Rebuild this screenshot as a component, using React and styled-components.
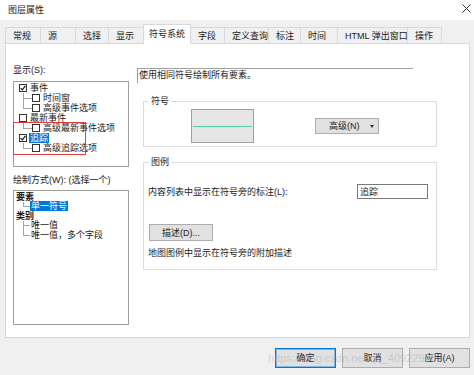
import React from "react";
import styled, { createGlobalStyle } from "styled-components";

const GlobalStyle = createGlobalStyle`
  html, body {
    margin: 0;
    padding: 0;
    background: #f0f0f0;
  }
  body {
    font-family: "Liberation Sans", "Noto Sans CJK SC", sans-serif;
    font-size: 9px;
    color: #1b1b1b;
  }
  * {
    box-sizing: border-box;
  }
`;

const Window = styled.div`
  position: relative;
  width: 474px;
  height: 375px;
  display: flex;
  flex-direction: column;
  background: #f0f0f0;
  overflow: hidden;
`;

const TitleBar = styled.div`
  height: 20px;
  background: #fff;
  display: flex;
  align-items: center;
  justify-content: space-between;
  padding: 0 3px 0 8px;
  line-height: 12px;
`;

const CloseBox = styled.span`
  align-self: flex-start;
  margin-top: 4px;
  width: 9px;
  height: 9px;
  display: flex;
`;

const TabStrip = styled.div`
  position: relative;
  z-index: 1;
  display: flex;
  align-items: flex-end;
  height: 19px;
  margin-top: 4px;
  padding-left: 5px;
`;

const Tab = styled.div`
  width: ${(props) => props.w}px;
  height: ${(props) => (props.active ? "20px" : "16px")};
  margin-bottom: ${(props) => (props.active ? "-1px" : "0")};
  margin-left: ${(props) => (props.first ? "0" : "-1px")};
  position: relative;
  z-index: ${(props) => (props.active ? 2 : 1)};
  display: flex;
  align-items: center;
  padding: ${(props) => (props.active ? "0 0 2px 5px" : "0 0 0 7px")};
  background: ${(props) => (props.active ? "#fff" : "#f0f0f0")};
  border: 1px solid #d9d9d9;
  border-bottom: none;
  line-height: 12px;
  white-space: nowrap;
`;

const Panel = styled.div`
  height: 295px;
  margin: 0 4px 0 5px;
  border: 1px solid #d9d9d9;
  background: #fff;
  display: flex;
  align-items: flex-start;
`;

const LeftCol = styled.div`
  width: 116px;
  margin-left: 7px;
  padding-top: 20px;
  display: flex;
  flex-direction: column;
`;

const FieldLabel = styled.div`
  line-height: 12px;
  height: 12px;
  margin-top: ${(props) => props.top || 0}px;
  margin-bottom: ${(props) => props.bottom || 0}px;
  white-space: nowrap;
`;

const TreeBox = styled.div`
  position: relative;
  height: ${(props) => props.h}px;
  border: 1px solid #9d9d9d;
  background: #fff;
  padding-top: 1px;
`;

const TreeRow = styled.div`
  display: flex;
  align-items: center;
  height: ${(props) => props.h}px;
  padding-left: ${(props) => props.indent}px;
  line-height: 10px;
  white-space: nowrap;
`;

const Connector = styled.span`
  position: relative;
  flex: none;
  align-self: stretch;
  width: ${(props) => props.w}px;

  &::before {
    content: "";
    position: absolute;
    left: 0;
    top: 0;
    width: 1px;
    height: ${(props) => (props.last ? "50%" : "100%")};
    background: #a3a3a3;
  }

  &::after {
    content: "";
    position: absolute;
    left: 0;
    right: 0;
    top: 50%;
    height: 1px;
    background: #a3a3a3;
  }
`;

const CheckBox = styled.span`
  flex: none;
  width: 8px;
  height: 8px;
  border: 1px solid #333;
  background: #fff;
  display: flex;
  align-items: center;
  justify-content: center;
  margin-right: 2px;
`;

const ItemText = styled.span`
  padding: 0 1px;
  font-weight: ${(props) => (props.bold ? 700 : 400)};
  background: ${(props) => (props.selected ? "#0078d7" : "transparent")};
  color: ${(props) => (props.selected ? "#fff" : "inherit")};
`;

const Annotation = styled.svg`
  position: absolute;
  z-index: 5;
  left: -1px;
  top: 40px;
  pointer-events: none;
`;

const RightCol = styled.div`
  width: 300px;
  margin-left: 8px;
  padding-top: 24px;
  display: flex;
  flex-direction: column;
`;

const Desc = styled.div`
  width: 276px;
  height: 15px;
  border-top: 1px solid #a0a0a0;
  border-left: 1px solid #a0a0a0;
  padding-left: 1px;
  line-height: 12px;
`;

const Group = styled.fieldset`
  width: 294px;
  margin: ${(props) => props.top}px 0 0 6px;
  padding: 0;
  border: 1px solid #dcdcdc;
  min-width: 0;
`;

const GroupTitle = styled.legend`
  margin-left: 5px;
  padding: 0 2px;
  line-height: 10px;
  font-size: 9px;
`;

const SymbolRow = styled.div`
  height: 40px;
  display: flex;
  align-items: center;
  padding-left: 47px;
`;

const SymbolPreview = styled.div`
  width: 63px;
  height: 34px;
  background: #e6e6e6;
  border: 1px solid #a0a0a0;
  display: flex;
  align-items: center;
  padding: 0 1px;
`;

const Stroke = styled.div`
  flex: 1;
  height: 1px;
  background: #52d0a8;
`;

const DropButton = styled.div`
  width: 64px;
  height: 16px;
  margin-left: 61px;
  background: #e1e1e1;
  border: 1px solid #adadad;
  display: flex;
  align-items: center;
  justify-content: space-between;
  padding: 0 4px 0 13px;
  line-height: 12px;
`;

const Caret = styled.span`
  width: 0;
  height: 0;
  border-left: 2px solid transparent;
  border-right: 2px solid transparent;
  border-top: 3px solid #333;
`;

const LegendRow = styled.div`
  margin-top: 17px;
  height: 15px;
  display: flex;
  align-items: center;
  justify-content: space-between;
  padding: 0 8px 0 4px;
  line-height: 12px;
`;

const TextInput = styled.input`
  width: 71px;
  height: 15px;
  border: 1px solid #7a7a7a;
  background: #fff;
  padding: 0 2px;
  font: inherit;
  line-height: 12px;
  color: #1b1b1b;
  outline: none;
`;

const PushButton = styled.div`
  width: 64px;
  height: 17px;
  margin: 25px 0 0 5px;
  background: #e1e1e1;
  border: 1px solid #adadad;
  display: flex;
  align-items: center;
  justify-content: center;
  line-height: 12px;
`;

const Note = styled.div`
  margin: 6px 0 10px 4px;
  line-height: 12px;
`;

const ButtonBar = styled.div`
  margin-top: 10px;
  display: flex;
  justify-content: flex-end;
  gap: 6px;
  padding-right: 4px;
`;

const DialogButton = styled.div`
  width: 61px;
  height: 20px;
  background: #e1e1e1;
  border: 1px solid ${(props) => (props.primary ? "#0078d7" : "#adadad")};
  box-shadow: ${(props) => (props.primary ? "inset 0 0 0 1px #7fb6e6" : "none")};
  display: flex;
  align-items: center;
  justify-content: center;
  line-height: 12px;
`;

const Watermark = styled.div`
  position: absolute;
  left: 268px;
  top: 352px;
  font-family: "Liberation Sans", Arial, sans-serif;
  font-size: 11px;
  color: rgba(160, 160, 160, 0.4);
  white-space: nowrap;
  pointer-events: none;
`;

const tabs = [
  { label: "常规", w: 36 },
  { label: "源", w: 36 },
  { label: "选择", w: 34 },
  { label: "显示", w: 36 },
  { label: "符号系统", w: 48, active: true },
  { label: "字段", w: 35 },
  { label: "定义查询", w: 45 },
  { label: "标注", w: 33 },
  { label: "时间", w: 38 },
  { label: "HTML 弹出窗口", w: 71 },
  { label: "操作", w: 35 },
];

const displayTree = [
  { text: "事件", checked: true },
  { text: "时间窗", child: true },
  { text: "高级事件选项", child: true, last: true },
  { text: "最新事件" },
  { text: "高级最新事件选项", child: true, last: true },
  { text: "追踪", checked: true, selected: true },
  { text: "高级追踪选项", child: true, last: true },
];

const drawTree = [
  { text: "要素", bold: true },
  { text: "单一符号", child: true, last: true, selected: true },
  { text: "类别", bold: true },
  { text: "唯一值", child: true },
  { text: "唯一值，多个字段", child: true, last: true },
];

const Check = () => (
  <svg width="6" height="6" viewBox="0 0 6 6">
    <path d="M0.6 3.1 L2.3 4.8 L5.4 0.9" fill="none" stroke="#111" strokeWidth="1.2" />
  </svg>
);

const CloseIcon = () => (
  <svg width="9" height="9" viewBox="0 0 9 9">
    <path d="M0.5 0.5 L8.5 8.5 M8.5 0.5 L0.5 8.5" stroke="#333" strokeWidth="1" />
  </svg>
);

const App = () => {
  return (
    <Window>
      <GlobalStyle />
      <TitleBar>
        <span>图层属性</span>
        <CloseBox>
          <CloseIcon />
        </CloseBox>
      </TitleBar>

      <TabStrip>
        {tabs.map((t, i) => (
          <Tab key={t.label} w={t.w} active={t.active} first={i === 0}>
            {t.label}
          </Tab>
        ))}
      </TabStrip>

      <Panel>
        <LeftCol>
          <FieldLabel bottom={5}>显示(S):</FieldLabel>
          <TreeBox h={86}>
            {displayTree.map((item) => (
              <TreeRow key={item.text} h={10} indent={item.child ? 9 : 5}>
                {item.child && <Connector w={9} last={item.last} />}
                <CheckBox>{item.checked && <Check />}</CheckBox>
                <ItemText selected={item.selected}>{item.text}</ItemText>
              </TreeRow>
            ))}
            <Annotation width="73" height="33" viewBox="0 0 73 33">
              <rect x="0.5" y="0.5" width="72" height="32" fill="none" stroke="#e23b3b" strokeWidth="1" />
            </Annotation>
          </TreeBox>

          <FieldLabel top={7} bottom={4}>
            绘制方式(W): (选择一个)
          </FieldLabel>
          <TreeBox h={135}>
            {drawTree.map((item) => (
              <TreeRow key={item.text} h={9.5} indent={item.child ? 9 : 1}>
                {item.child && <Connector w={7} last={item.last} />}
                <ItemText bold={item.bold} selected={item.selected}>
                  {item.text}
                </ItemText>
              </TreeRow>
            ))}
          </TreeBox>
        </LeftCol>

        <RightCol>
          <Desc>使用相同符号绘制所有要素。</Desc>

          <Group top={13}>
            <GroupTitle>符号</GroupTitle>
            <SymbolRow>
              <SymbolPreview>
                <Stroke />
              </SymbolPreview>
              <DropButton>
                <span>高级(N)</span>
                <Caret />
              </DropButton>
            </SymbolRow>
          </Group>

          <Group top={10}>
            <GroupTitle>图例</GroupTitle>
            <LegendRow>
              <span>内容列表中显示在符号旁的标注(L):</span>
              <TextInput readOnly value="追踪" />
            </LegendRow>
            <PushButton>描述(D)...</PushButton>
            <Note>地图图例中显示在符号旁的附加描述</Note>
          </Group>
        </RightCol>
      </Panel>

      <ButtonBar>
        <DialogButton primary>确定</DialogButton>
        <DialogButton>取消</DialogButton>
        <DialogButton>应用(A)</DialogButton>
      </ButtonBar>

      <Watermark>https://blog.csdn.net/qq_40922938</Watermark>
    </Window>
  );
};

export default App;
